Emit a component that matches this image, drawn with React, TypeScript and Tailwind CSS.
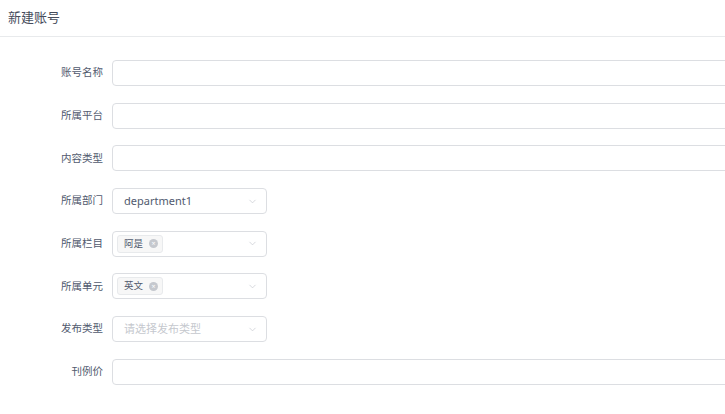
import { ChevronDown } from "lucide-react";

const FONT = { fontFamily: '"Noto Sans", "Noto Sans CJK SC", sans-serif' };

function Row({ label, children }: { label: string; children: React.ReactNode }) {
  return (
    <div className="flex h-[26px] items-center">
      <label className="w-[112px] shrink-0 pr-[9px] text-right text-[10.5px] text-[#515a6e]">
        {label}
      </label>
      {children}
    </div>
  );
}

function TextInput() {
  return (
    <div className="h-[26px] w-[640px] shrink-0 rounded-[4px] border border-[#dcdee2] bg-white" />
  );
}

function Tag({ text }: { text: string }) {
  return (
    <span className="flex h-[18px] items-center gap-[6px] rounded-[3px] border border-[#e8eaec] bg-[#f7f7f7] pl-[6px] pr-[4px] text-[9.5px] text-[#515a6e]">
      {text}
      <span className="flex h-[9px] w-[9px] items-center justify-center rounded-full bg-[#c5c8ce] text-[7px] leading-none text-white">
        ×
      </span>
    </span>
  );
}

function Select({ children }: { children: React.ReactNode }) {
  return (
    <div className="flex h-[26px] w-[155px] shrink-0 items-center justify-between rounded-[4px] border border-[#dcdee2] bg-white pl-[4px] pr-[8px]">
      <div className="flex items-center">{children}</div>
      <ChevronDown className="h-[11px] w-[11px] text-[#c5c8ce]" strokeWidth={1.5} />
    </div>
  );
}

export default function App() {
  return (
    <div className="h-[414px] w-[725px] overflow-hidden bg-white" style={FONT}>
      <div className="flex h-[37px] items-center border-b border-[#e8eaec] pl-[8px] text-[13px] text-[#464c5b]">
        新建账号
      </div>
      <div className="flex flex-col gap-[16.7px] pt-[23px]">
        <Row label="账号名称">
          <TextInput />
        </Row>
        <Row label="所属平台">
          <TextInput />
        </Row>
        <Row label="内容类型">
          <TextInput />
        </Row>
        <Row label="所属部门">
          <Select>
            <span className="pl-[7px] text-[11px] text-[#515a6e]">department1</span>
          </Select>
        </Row>
        <Row label="所属栏目">
          <Select>
            <Tag text="阿是" />
          </Select>
        </Row>
        <Row label="所属单元">
          <Select>
            <Tag text="英文" />
          </Select>
        </Row>
        <Row label="发布类型">
          <Select>
            <span className="pl-[7px] text-[11px] text-[#c5c8ce]">请选择发布类型</span>
          </Select>
        </Row>
        <Row label="刊例价">
          <TextInput />
        </Row>
      </div>
    </div>
  );
}
